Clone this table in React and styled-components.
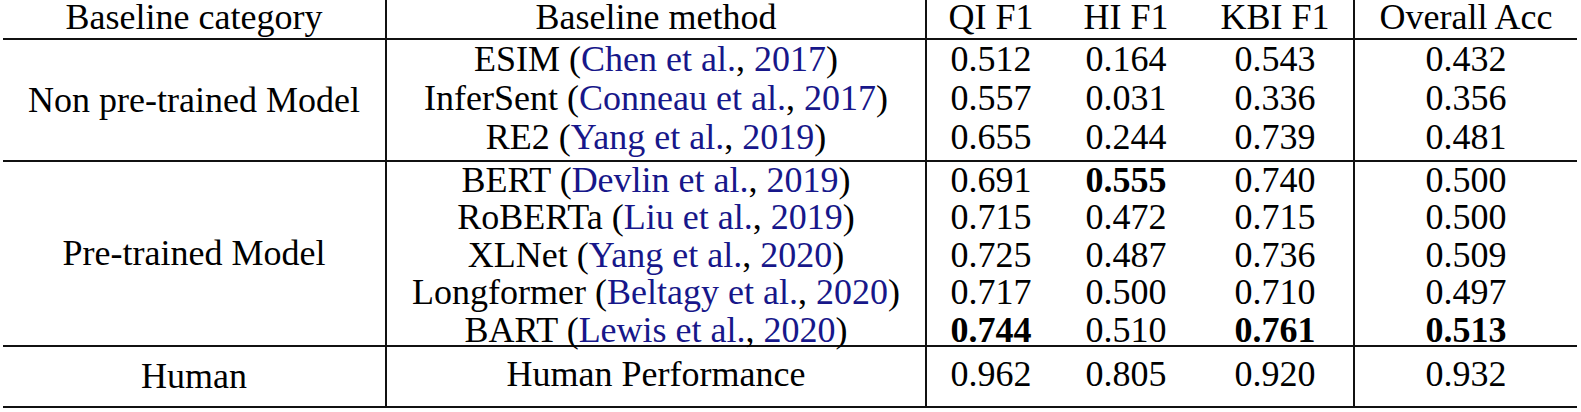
import styled, { createGlobalStyle } from "styled-components";

const Global = createGlobalStyle`
  body {
    margin: 0;
    background: #fff;
    color: #000;
  }
`;

const Table = styled.div`
  margin-left: 3px;
  width: 1574px;
  display: flex;
  flex-direction: column;
  font-family: "Liberation Serif", "Times New Roman", serif;
  font-size: 36px;
`;

const Group = styled.div`
  display: flex;
  border-bottom: 2px solid #111;
`;

const Col = styled.div`
  width: ${(p) => p.w}px;
  flex: none;
  display: flex;
  flex-direction: column;
  justify-content: ${(p) => (p.span ? "center" : "flex-start")};
  padding: ${(p) => (p.span ? 0 : `${p.pt || 0}px 0 ${p.pb || 0}px`)};
  border-right: ${(p) => (p.line ? "2px solid #111" : "none")};
`;

const Cell = styled.div`
  height: ${(p) => p.h || 36}px;
  line-height: ${(p) => p.h || 36}px;
  text-align: center;
  white-space: nowrap;
  font-weight: ${(p) => (p.bold ? 700 : 400)};
  &:last-child {
    margin-bottom: ${(p) => p.tail || 0}px;
  }
`;

const Cite = styled.span`
  color: #17178a;
`;

const widths = { cat: 382, method: 538, qi: 128, hi: 142, kbi: 156, acc: 222 };

const groups = [
  {
    cat: "Non pre-trained Model",
    h: 39,
    pt: 0,
    pb: 3,
    tail: 0,
    rows: [
      ["ESIM", "Chen", "2017", "0.512", "0.164", "0.543", "0.432"],
      ["InferSent", "Conneau", "2017", "0.557", "0.031", "0.336", "0.356"],
      ["RE2", "Yang", "2019", "0.655", "0.244", "0.739", "0.481"],
    ],
  },
  {
    cat: "Pre-trained Model",
    h: 37.4,
    pt: 0,
    pb: 0,
    tail: -4,
    bold: { "0-1": true, "4-0": true, "4-2": true, "4-3": true },
    rows: [
      ["BERT", "Devlin", "2019", "0.691", "0.555", "0.740", "0.500"],
      ["RoBERTa", "Liu", "2019", "0.715", "0.472", "0.715", "0.500"],
      ["XLNet", "Yang", "2020", "0.725", "0.487", "0.736", "0.509"],
      ["Longformer", "Beltagy", "2020", "0.717", "0.500", "0.710", "0.497"],
      ["BART", "Lewis", "2020", "0.744", "0.510", "0.761", "0.513"],
    ],
  },
];

const numCols = [
  { key: "qi", line: false },
  { key: "hi", line: false },
  { key: "kbi", line: true },
  { key: "acc", line: false },
];

function Header() {
  const heads = ["QI F1", "HI F1", "KBI F1", "Overall Acc"];
  return (
    <Group>
      <Col w={widths.cat} line pb={4}>
        <Cell h={34}>Baseline category</Cell>
      </Col>
      <Col w={widths.method} line pb={4}>
        <Cell h={34}>Baseline method</Cell>
      </Col>
      {numCols.map((c, i) => (
        <Col key={c.key} w={widths[c.key]} line={c.line} pb={4}>
          <Cell h={34}>{heads[i]}</Cell>
        </Col>
      ))}
    </Group>
  );
}

function DataGroup({ g }) {
  const bold = g.bold || {};
  return (
    <Group>
      <Col w={widths.cat} line span>
        <Cell>{g.cat}</Cell>
      </Col>
      <Col w={widths.method} line pt={g.pt} pb={g.pb}>
        {g.rows.map((r) => (
          <Cell key={r[0]} h={g.h} tail={g.tail}>
            {r[0]} (<Cite>{r[1]} et al.</Cite>, <Cite>{r[2]}</Cite>)
          </Cell>
        ))}
      </Col>
      {numCols.map((c, ci) => (
        <Col key={c.key} w={widths[c.key]} line={c.line} pt={g.pt} pb={g.pb}>
          {g.rows.map((r, ri) => (
            <Cell key={ri} h={g.h} tail={g.tail} bold={bold[`${ri}-${ci}`]}>
              {r[3 + ci]}
            </Cell>
          ))}
        </Col>
      ))}
    </Group>
  );
}

function HumanGroup() {
  const vals = ["0.962", "0.805", "0.920", "0.932"];
  return (
    <Group>
      <Col w={widths.cat} line span>
        <Cell>Human</Cell>
      </Col>
      <Col w={widths.method} line pt={9} pb={14}>
        <Cell>Human Performance</Cell>
      </Col>
      {numCols.map((c, i) => (
        <Col key={c.key} w={widths[c.key]} line={c.line} pt={9} pb={14}>
          <Cell>{vals[i]}</Cell>
        </Col>
      ))}
    </Group>
  );
}

export default function App() {
  return (
    <>
      <Global />
      <Table>
        <Header />
        {groups.map((g) => (
          <DataGroup key={g.cat} g={g} />
        ))}
        <HumanGroup />
      </Table>
    </>
  );
}
